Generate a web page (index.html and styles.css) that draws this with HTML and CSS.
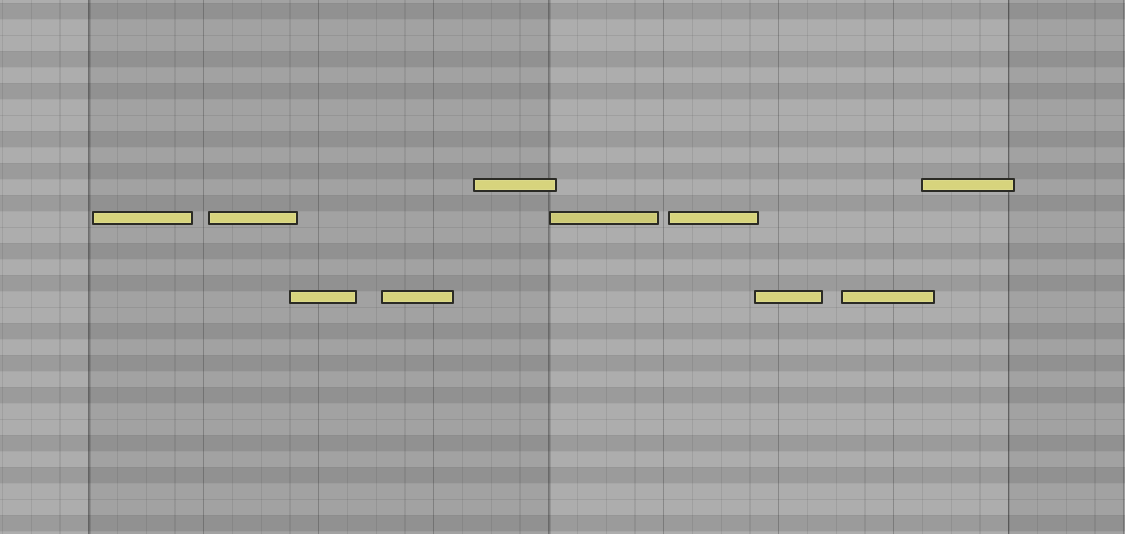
FILE: index.html
```html
<!DOCTYPE html>
<html lang="en">
<head>
<meta charset="utf-8">
<title>Piano Roll</title>
<link rel="stylesheet" href="styles.css">
</head>
<body>
<main class="roll">
  <!-- pitch lanes, top to bottom starting at G -->
  <div class="keys">
    <div class="key w"></div><div class="key b"></div><div class="key w"></div><div class="key w e"></div>
    <div class="key b"></div><div class="key w"></div><div class="key b"></div><div class="key w"></div>
    <div class="key w e"></div><div class="key b"></div><div class="key w"></div><div class="key b"></div>
    <div class="key w"></div><div class="key b"></div><div class="key w"></div><div class="key w e"></div>
    <div class="key b"></div><div class="key w"></div><div class="key b"></div><div class="key w"></div>
    <div class="key w e"></div><div class="key b"></div><div class="key w"></div><div class="key b"></div>
    <div class="key w"></div><div class="key b"></div><div class="key w"></div><div class="key w e"></div>
    <div class="key b"></div><div class="key w"></div><div class="key b"></div><div class="key w"></div>
    <div class="key w e"></div><div class="key b"></div><div class="key w"></div>
  </div>

  <!-- bar / beat grid, shaded every four bars -->
  <div class="bars">
    <div class="grp lead"></div>
    <div class="grp shade"></div>
    <div class="grp"></div>
    <div class="grp shade tail"></div>
  </div>

  <!-- MIDI notes -->
  <div class="notes">
    <div class="note" style="left:92px;top:211px;width:101px"></div>
    <div class="note" style="left:208px;top:211px;width:90px"></div>
    <div class="note" style="left:289px;top:290px;width:68px"></div>
    <div class="note" style="left:381px;top:290px;width:73px"></div>
    <div class="note" style="left:473px;top:178px;width:84px"></div>
    <div class="note dim" style="left:549px;top:211px;width:110px"></div>
    <div class="note" style="left:668px;top:211px;width:91px"></div>
    <div class="note" style="left:754px;top:290px;width:69px"></div>
    <div class="note" style="left:841px;top:290px;width:94px"></div>
    <div class="note" style="left:921px;top:178px;width:94px"></div>
  </div>
</main>
</body>
</html>
```

FILE: styles.css
```css
html, body {
  margin: 0;
  padding: 0;
  background: #a9a9a9;
  font-family: "Liberation Sans", Arial, sans-serif;
}

.roll {
  position: relative;
  width: 1125px;
  height: 534px;
  overflow: hidden;
}

/* lanes */
.keys {
  display: flex;
  flex-direction: column;
  margin-top: -13px;
}

.key {
  height: 16px;
  box-sizing: border-box;
  border-top: 1px solid rgba(0, 0, 0, 0.03);
}

.key.w { background: #adadad; }
.key.b { background: #9b9b9b; }
.key.e { border-top-color: rgba(0, 0, 0, 0.08); }

/* grid */
.bars {
  position: absolute;
  inset: 0;
  display: flex;
}

.grp {
  width: 460px;
  flex: none;
  background-image:
    linear-gradient(to right, rgba(0, 0, 0, 0.14) 0 0.5px, rgba(0, 0, 0, 0.24) 0.5px 1.5px, rgba(0, 0, 0, 0.12) 1.5px 2.5px, transparent 2.5px),
    repeating-linear-gradient(to right, rgba(0, 0, 0, 0.15) 0 1.2px, transparent 1.2px 115px),
    repeating-linear-gradient(to right, rgba(0, 0, 0, 0.08) 0 1.3px, transparent 1.3px 28.75px);
}

.grp.shade {
  background-color: rgba(0, 0, 0, 0.06);
}

.grp.lead {
  width: 88px;
  background-image:
    repeating-linear-gradient(to left, transparent 0 27.5px, rgba(0, 0, 0, 0.08) 27.5px 28.75px);
}

.grp.tail {
  flex: 1;
}

/* notes */
.notes {
  position: absolute;
  inset: 0;
}

.note {
  position: absolute;
  height: 14px;
  box-sizing: border-box;
  border: 2px solid #2b2b25;
  border-radius: 1px;
  background: #d7d47d;
  box-shadow: inset 0 0 0 1px rgba(255, 255, 240, 0.12);
}

.note.dim {
  background: #cdca76;
}
```
